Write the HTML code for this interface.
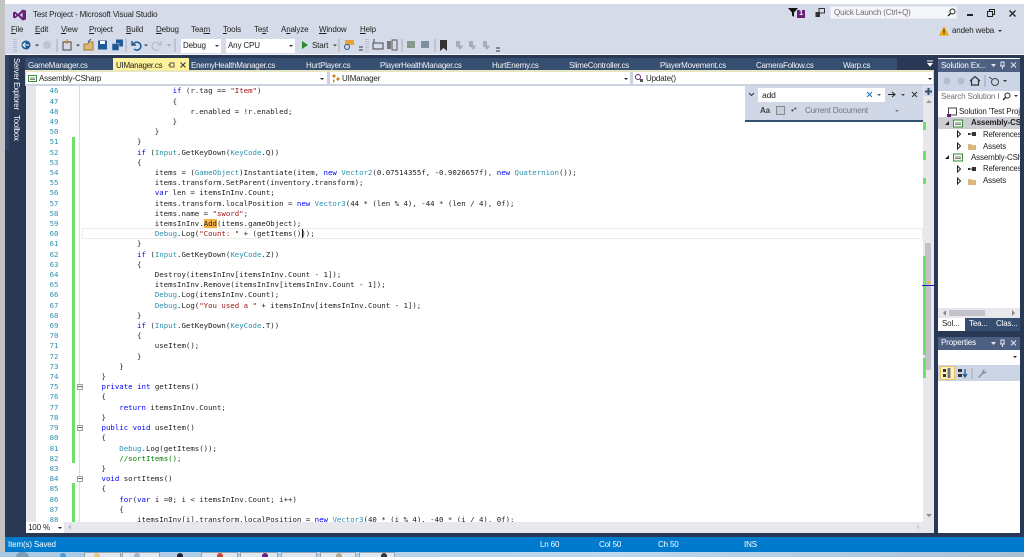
<!DOCTYPE html>
<html><head><meta charset="utf-8"><title>Test Project - Microsoft Visual Studio</title>
<style>
*{box-sizing:border-box}
html,body{margin:0;padding:0;width:1024px;height:557px;overflow:hidden;background:#fff}
body{position:relative;font-family:"Liberation Sans",sans-serif;font-size:8px;letter-spacing:-.15px;color:#1e1e1e}
.a,.t{position:absolute}
.t{white-space:pre;line-height:10px;height:10px}
.c{position:absolute;left:66px;top:86.400px;margin:0;font:7.390px/10.200px "DejaVu Sans Mono",monospace;letter-spacing:0;color:#222;white-space:pre}
.n{position:absolute;left:40px;width:18.500px;top:86.400px;margin:0;font:7.390px/10.200px "DejaVu Sans Mono",monospace;letter-spacing:0;color:#2b91af;text-align:right;white-space:pre}
.k{color:#0000ff}.y{color:#2b91af}.s{color:#a31515}.g{color:#008000}
.hl{background:#f5b34a}
.w{color:#fff}
.tab{color:#f0f3f8;top:61px;letter-spacing:-.25px}
.fold{position:absolute;left:77px;width:6px;height:6px;border:1px solid #a0a0a0;background:#fff}
.fold:after{content:"";position:absolute;left:0;top:1px;width:4px;height:1px;background:#666}
.btn{position:absolute;top:552px;height:5px;background:#dfe8f1;border:1px solid #98a4b0;border-bottom:0}
.dot{position:absolute;top:553px;width:6px;height:4px;border-radius:3px 3px 0 0}
</style></head><body>

<div class="a" style="left:0;top:0;width:5px;height:557px;background:#c3c3c3"></div>
<div class="a" style="left:5px;top:0;width:1019px;height:4px;background:#fff"></div>
<div class="a" style="left:5px;top:4px;width:1019px;height:50px;background:#d6dbe9"></div>
<div class="a" style="left:5px;top:54px;width:1019px;height:1px;background:#f4f6fa"></div>
<div class="a" style="left:5px;top:55px;width:1019px;height:482px;background:#293955"></div>

<svg class="a" style="left:12px;top:9px" width="15" height="12" viewBox="0 0 15 12"><path d="M1 3.500 L3 2.500 L6 5 L10.500 0.500 L14 1.500 V10.500 L10.500 11.500 L6 7 L3 9.500 L1 8.500 Z M3 4.800 V7.200 L4.500 6 Z M10.500 3.600 L7.800 6 L10.500 8.400 Z" fill="#68217a" fill-rule="evenodd"/></svg>
<div class="t" style="left:33px;top:10px">Test Project - Microsoft Visual Studio</div>

<svg class="a" style="left:788px;top:8px" width="10" height="9" viewBox="0 0 10 9"><path d="M0 0H10L6 4.500V9L4 7.500V4.500Z" fill="#111"/></svg>
<div class="a" style="left:797px;top:10px;width:8px;height:8px;background:#68217a;color:#fff;font-size:7px;line-height:8px;text-align:center;font-weight:bold">1</div>
<svg class="a" style="left:815px;top:8px" width="10" height="10" viewBox="0 0 10 10"><rect x="4" y="0.500" width="5.500" height="4.500" fill="none" stroke="#333"/><rect x="0.500" y="4" width="4.500" height="5" fill="#333"/></svg>
<div class="a" style="left:830px;top:6px;width:127px;height:13px;background:#f5f6fa;border:1px solid #e6e9f2"></div>
<div class="t" style="left:834px;top:8px;color:#6d6d6d">Quick Launch (Ctrl+Q)</div>
<svg class="a" style="left:947px;top:8px" width="9" height="9" viewBox="0 0 9 9"><circle cx="5.500" cy="3.500" r="2.500" fill="none" stroke="#222"/><path d="M3.500 5.500L1 8" stroke="#222" stroke-width="1.300"/></svg>
<div class="a" style="left:967px;top:14px;width:6px;height:2px;background:#222"></div>
<svg class="a" style="left:987px;top:9px" width="8" height="8" viewBox="0 0 8 8"><rect x="2.500" y="0.500" width="5" height="5" fill="none" stroke="#222"/><rect x="0.500" y="2.500" width="5" height="5" fill="#d6dbe9" stroke="#222"/></svg>
<svg class="a" style="left:1009px;top:10px" width="7" height="7" viewBox="0 0 7 7"><path d="M0.500 0.500L6.500 6.500M6.500 0.500L0.500 6.500" stroke="#222" stroke-width="1.300"/></svg>
<svg class="a" style="left:939px;top:26px" width="10" height="10" viewBox="0 0 10 10"><path d="M5 0L10 9.500H0Z" fill="#f2a900"/><rect x="4.500" y="3" width="1" height="4" fill="#222"/><rect x="4.500" y="7.600" width="1" height="1" fill="#222"/></svg>
<div class="t" style="left:952px;top:26px">andeh weba</div>
<div class="a" style="left:998px;top:30px;border:2px solid transparent;border-top:2px solid #333"></div>

<div class="t" style="left:11px;top:25px"><u>F</u>ile</div>
<div class="t" style="left:35px;top:25px"><u>E</u>dit</div>
<div class="t" style="left:61px;top:25px"><u>V</u>iew</div>
<div class="t" style="left:89px;top:25px"><u>P</u>roject</div>
<div class="t" style="left:126px;top:25px"><u>B</u>uild</div>
<div class="t" style="left:156px;top:25px"><u>D</u>ebug</div>
<div class="t" style="left:191px;top:25px">Tea<u>m</u></div>
<div class="t" style="left:223px;top:25px"><u>T</u>ools</div>
<div class="t" style="left:254px;top:25px">Te<u>s</u>t</div>
<div class="t" style="left:281px;top:25px">A<u>n</u>alyze</div>
<div class="t" style="left:319px;top:25px"><u>W</u>indow</div>
<div class="t" style="left:360px;top:25px"><u>H</u>elp</div>

<svg class="a" style="left:12px;top:38px" width="520" height="15" viewBox="0 0 520 15">
<path d="M2 1v13M4 1v13" stroke="#a0a6b5" stroke-dasharray="1 1"/>
<circle cx="14" cy="7" r="4.500" fill="#1e5a96"/><path d="M17 7H11M13.500 4.500L11 7L13.500 9.500" stroke="#fff" fill="none"/>
<path d="M23 6.500h4l-2 2z" fill="#444"/>
<circle cx="35" cy="7" r="4" fill="#c0c4cc"/>
<path d="M45 1v13" stroke="#aab"/>
<rect x="51" y="4" width="8" height="8" fill="none" stroke="#444"/><path d="M55 1v5M52.500 3.500h5" stroke="#c27d1a"/>
<path d="M64 6.500h4l-2 2z" fill="#444"/>
<path d="M72 6h4l1-2h4v8H72z" fill="#dcb67a" stroke="#a07a30"/><path d="M76 4l3-3" stroke="#1e5a96"/>
<rect x="86" y="2.500" width="9" height="9" fill="#1e5a96"/><rect x="88" y="3" width="5" height="3" fill="#fff"/>
<rect x="104" y="1.500" width="7" height="7" fill="#1e5a96"/><rect x="100" y="5.500" width="7" height="7" fill="#1e5a96" stroke="#d6dbe9" stroke-width=".5"/>
<path d="M114 1v13" stroke="#aab"/>
<path d="M120 3v4h4M121 7a4 4 0 1 1 1 4" fill="none" stroke="#1e5a96" stroke-width="1.500"/>
<path d="M132 6.500h4l-2 2z" fill="#444"/>
<path d="M149 3v4h-4M148 7a4 4 0 1 0-1 4" fill="none" stroke="#b8bcc6" stroke-width="1.300"/>
<path d="M155 6.500h4l-2 2z" fill="#999"/>
<path d="M163 1v13" stroke="#aab"/>
<path d="M290 3v8l6-4z" fill="#2c8a2c"/>
<path d="M321 6.500h4l-2 2z" fill="#444"/>
<path d="M327 1v13" stroke="#aab"/>
<rect x="333" y="2" width="9" height="5" fill="#e8a33a"/><circle cx="335" cy="9" r="2.500" fill="none" stroke="#1e5a96"/>
<path d="M347 9h4M347 12h4" stroke="#333"/>
<path d="M354 1v13M356 1v13" stroke="#a0a6b5" stroke-dasharray="1 1"/>
<rect x="361" y="5" width="10" height="6" fill="none" stroke="#444"/><path d="M362 1v4" stroke="#1e5a96"/>
<rect x="375" y="3" width="4" height="8" fill="#777"/><rect x="380" y="2" width="5" height="10" fill="none" stroke="#555"/>
<path d="M390 1v13" stroke="#aab"/>
<rect x="395" y="3" width="8" height="7" fill="#8a9a8a"/><rect x="409" y="3" width="8" height="7" fill="#7f8ea0"/>
<path d="M423 1v13" stroke="#aab"/>
<path d="M428 2h7v11l-3.500-3-3.500 3z" fill="#333"/>
<path d="M444 3h4v4l3 1-3 4-2-3h-2z" fill="#a8adb8"/><path d="M457 3h4v4l3 1-3 4-2-3h-2z" fill="#a8adb8"/><path d="M471 3h4v4l3 1-3 4-2-3h-2z" fill="#a8adb8"/>
<path d="M484 10h4M484 13h4" stroke="#333"/>
</svg>
<div class="a" style="left:181px;top:39px;width:40px;height:14px;background:#fff"></div>
<div class="t" style="left:183px;top:41px">Debug</div>
<div class="a" style="left:215px;top:45px;border:2px solid transparent;border-top:2px solid #333"></div>
<div class="a" style="left:226px;top:39px;width:69px;height:14px;background:#fff"></div>
<div class="t" style="left:228px;top:41px">Any CPU</div>
<div class="a" style="left:289px;top:45px;border:2px solid transparent;border-top:2px solid #333"></div>
<div class="t" style="left:312px;top:41px">Start</div>

<svg class="a" style="left:5px;top:55px" width="20" height="100" viewBox="0 0 20 100"><rect x="0" y="0" width="4" height="95" fill="#364e6f" opacity=".6"/></svg>
<div class="t w" style="left:10px;top:58px;font-size:7.800px;transform-origin:0 0;transform:translate(11px,0) rotate(90deg)">Server Explorer</div>
<div class="t w" style="left:10px;top:115px;font-size:7.800px;transform-origin:0 0;transform:translate(11px,0) rotate(90deg)">Toolbox</div>

<div class="a" style="left:25px;top:58px;width:872px;height:12px;background:#364e6f"></div>
<div class="a" style="left:113px;top:58px;width:76px;height:12px;background:#fff29d"></div>
<div class="a" style="left:25px;top:70px;width:909px;height:2px;background:#e8e6c0"></div>
<div class="t tab" style="left:28px">GameManager.cs</div>
<div class="t tab" style="left:116px;color:#222">UIManager.cs</div>
<svg class="a" style="left:168px;top:62px" width="7" height="6" viewBox="0 0 7 6"><path d="M0 3h2M2 1v4h4V1z" stroke="#555" fill="none"/></svg>
<svg class="a" style="left:180px;top:62px" width="6" height="6" viewBox="0 0 6 6"><path d="M0.500 0.500L5.500 5.500M5.500 0.500L0.500 5.500" stroke="#333"/></svg>
<div class="t tab" style="left:191px">EnemyHealthManager.cs</div>
<div class="t tab" style="left:306px">HurtPlayer.cs</div>
<div class="t tab" style="left:380px">PlayerHealthManager.cs</div>
<div class="t tab" style="left:492px">HurtEnemy.cs</div>
<div class="t tab" style="left:569px">SlimeController.cs</div>
<div class="t tab" style="left:660px">PlayerMovement.cs</div>
<div class="t tab" style="left:756px">CameraFollow.cs</div>
<div class="t tab" style="left:843px">Warp.cs</div>
<svg class="a" style="left:927px;top:60px" width="6" height="7" viewBox="0 0 6 7"><path d="M0 1h6M1 3.500h4l-2 2.500z" stroke="#fff" fill="#fff"/></svg>

<div class="a" style="left:25px;top:72px;width:909px;height:14px;background:#ccd2df"></div>
<div class="a" style="left:26px;top:72px;width:301px;height:12px;background:#fff"></div>
<div class="a" style="left:330px;top:72px;width:300px;height:12px;background:#fff"></div>
<div class="a" style="left:633px;top:72px;width:300px;height:12px;background:#fff"></div>
<svg class="a" style="left:28px;top:74px" width="9" height="9" viewBox="0 0 9 9"><rect x=".5" y="1.500" width="8" height="6" fill="#fff" stroke="#3a8a3a"/><path d="M2 4h5M2 5.500h5" stroke="#555" stroke-width=".7"/></svg>
<div class="t" style="left:39px;top:74px">Assembly-CSharp</div>
<svg class="a" style="left:331px;top:74px" width="10" height="9" viewBox="0 0 10 9"><path d="M3 0l2 2-2 2-2-2zM7 3l2 2-2 2-2-2zM2 5l2 2-2 2z" fill="#c9812a"/></svg>
<div class="t" style="left:342px;top:74px">UIManager</div>
<svg class="a" style="left:635px;top:74px" width="8" height="9" viewBox="0 0 8 9"><circle cx="3" cy="3" r="2.500" fill="none" stroke="#68217a"/><rect x="5" y="5" width="3" height="3" fill="#555"/></svg>
<div class="t" style="left:646px;top:74px">Update()</div>
<div class="a" style="left:320px;top:78px;border:2px solid transparent;border-top:2px solid #222"></div>
<div class="a" style="left:624px;top:78px;border:2px solid transparent;border-top:2px solid #222"></div>
<div class="a" style="left:928px;top:78px;border:2px solid transparent;border-top:2px solid #222"></div>

<div class="a" style="left:26px;top:86px;width:898px;height:436px;background:#fff;overflow:hidden">
<div class="a" style="left:0;top:0;width:10px;height:436px;background:#e6e7e8"></div>
<div class="a" style="left:46px;top:51px;width:3px;height:326px;background:#6ee06a"></div>
<div class="a" style="left:46px;top:397px;width:3px;height:39px;background:#6ee06a"></div>
<div class="a" style="left:53px;top:0;width:1px;height:436px;background:#dcdcdc"></div>
<div class="a" style="left:56px;top:142px;width:841px;height:11px;border:1px solid #ececec"></div>
</div>
<div class="fold" style="top:384px"></div>
<div class="fold" style="top:425px"></div>
<div class="fold" style="top:476px"></div>

<div class="a" style="left:0;top:86px;width:924px;height:436px;overflow:hidden"><div class="a" style="left:0;top:-86px;width:924px;height:522px">
<pre class="n">46
47
48
49
50
51
52
53
54
55
56
57
58
59
60
61
62
63
64
65
66
67
68
69
70
71
72
73
74
75
76
77
78
79
80
81
82
83
84
85
86
87
88</pre>
<pre class="c">                        <span class="k">if</span> (r.tag == <span class="s">"Item"</span>)
                        {
                            r.enabled = !r.enabled;
                        }
                    }
                }
                <span class="k">if</span> (<span class="y">Input</span>.GetKeyDown(<span class="y">KeyCode</span>.Q))
                {
                    items = (<span class="y">GameObject</span>)Instantiate(item, <span class="k">new</span> <span class="y">Vector2</span>(0.07514355f, -0.9026657f), <span class="k">new</span> <span class="y">Quaternion</span>());
                    items.transform.SetParent(inventory.transform);
                    <span class="k">var</span> len = itemsInInv.Count;
                    items.transform.localPosition = <span class="k">new</span> <span class="y">Vector3</span>(44 * (len % 4), -44 * (len / 4), 0f);
                    items.name = <span class="s">"sword"</span>;
                    itemsInInv.<span class="hl">Add</span>(items.gameObject);
                    <span class="y">Debug</span>.Log(<span class="s">"Count: "</span> + (getItems()));
                }
                <span class="k">if</span> (<span class="y">Input</span>.GetKeyDown(<span class="y">KeyCode</span>.Z))
                {
                    Destroy(itemsInInv[itemsInInv.Count - 1]);
                    itemsInInv.Remove(itemsInInv[itemsInInv.Count - 1]);
                    <span class="y">Debug</span>.Log(itemsInInv.Count);
                    <span class="y">Debug</span>.Log(<span class="s">"You used a "</span> + itemsInInv[itemsInInv.Count - 1]);
                }
                <span class="k">if</span> (<span class="y">Input</span>.GetKeyDown(<span class="y">KeyCode</span>.T))
                {
                    useItem();
                }
            }
        }
        <span class="k">private</span> <span class="k">int</span> getItems()
        {
            <span class="k">return</span> itemsInInv.Count;
        }
        <span class="k">public</span> <span class="k">void</span> useItem()
        {
            <span class="y">Debug</span>.Log(getItems());
            <span class="g">//sortItems();</span>
        }
        <span class="k">void</span> sortItems()
        {
            <span class="k">for</span>(<span class="k">var</span> i =0; i &lt; itemsInInv.Count; i++)
            {
                itemsInInv[i].transform.localPosition = <span class="k">new</span> <span class="y">Vector3</span>(40 * (i % 4), -40 * (i / 4), 0f);</pre>
</div></div>
<div class="a" style="left:302px;top:229px;width:1px;height:9px;background:#111"></div>

<div class="a" style="left:745px;top:86px;width:179px;height:35px;background:#d0d7e6"></div>
<div class="a" style="left:745px;top:120px;width:179px;height:2px;background:#34506f"></div>
<div class="a" style="left:758px;top:88px;width:127px;height:14px;background:#fff"></div>
<div class="t" style="left:762px;top:90px;color:#222;font-size:8.500px">add</div>
<svg class="a" style="left:749px;top:91px" width="175" height="28" viewBox="0 0 175 28"><path d="M0 2l2.500 2.500L5 2" stroke="#333" fill="none"/><path d="M118 1l5 5M123 1l-5 5" stroke="#1e74c0"/><path d="M128 3h4l-2 2z" fill="#555"/><path d="M139 3.500h7M143 1l3 2.500-3 2.500" stroke="#222" fill="none"/><path d="M152 3h4l-2 2z" fill="#444"/><path d="M163 1l5 5M168 1l-5 5" stroke="#333"/><path d="M146 19h4l-2 2z" fill="#777"/></svg>
<div class="t" style="left:760px;top:106px;font-weight:bold;color:#444">Aa</div>
<div class="a" style="left:776px;top:106px;width:9px;height:9px;border:1px solid #888;background:#c8cdd8"></div>
<div class="t" style="left:791px;top:106px;color:#444">•*</div>
<div class="t" style="left:805px;top:106px;color:#6f7480">Current Document</div>

<div class="a" style="left:923px;top:86px;width:11px;height:447px;background:#e8e8ec"></div>
<div class="a" style="left:924px;top:87px;width:9px;height:9px;background:#d2d9e8"></div>
<svg class="a" style="left:924px;top:87px" width="9" height="9" viewBox="0 0 9 9"><path d="M4.500 1v7M1 4.500h7" stroke="#34506f" stroke-width="2"/></svg>
<div class="a" style="left:926px;top:100px;border:3px solid transparent;border-bottom:3px solid #9a9aa2;border-top:0"></div>
<div class="a" style="left:926px;top:514px;border:3px solid transparent;border-top:3px solid #8a8a92;border-bottom:0"></div>
<div class="a" style="left:925px;top:243px;width:6px;height:127px;background:#c2c3c9"></div>
<div class="a" style="left:923px;top:122px;width:3px;height:8px;background:#6ee06a"></div>
<div class="a" style="left:923px;top:151px;width:3px;height:9px;background:#6ee06a"></div>
<div class="a" style="left:923px;top:178px;width:3px;height:6px;background:#6ee06a"></div>
<div class="a" style="left:923px;top:256px;width:3px;height:99px;background:#6ee06a"></div>
<div class="a" style="left:923px;top:358px;width:3px;height:20px;background:#6ee06a"></div>
<div class="a" style="left:927px;top:281px;width:3px;height:3px;background:#f5b12e;border-radius:50%"></div>
<div class="a" style="left:922px;top:285px;width:12px;height:1px;background:#1a1ac0"></div>

<div class="a" style="left:26px;top:522px;width:897px;height:11px;background:#e8e8ec"></div>
<div class="a" style="left:26px;top:522px;width:38px;height:11px;background:#fff"></div>
<div class="t" style="left:28px;top:523px">100 %</div>
<div class="a" style="left:58px;top:527px;border:2px solid transparent;border-top:2px solid #222"></div>
<div class="a" style="left:68px;top:524px;border:3px solid transparent;border-right:3px solid #c2c3c9;border-left:0"></div>
<div class="a" style="left:917px;top:524px;border:3px solid transparent;border-left:3px solid #d0d0d6;border-right:0"></div>

<div class="a" style="left:938px;top:58px;width:82px;height:251px;background:#fff"></div>
<div class="a" style="left:938px;top:59px;width:82px;height:13px;background:#4d6082"></div>
<div class="t w" style="left:941px;top:61px">Solution Ex...</div>
<svg class="a" style="left:990px;top:61px" width="28" height="9" viewBox="0 0 28 9"><path d="M1 3h5L3.500 6z" fill="#e6e9f0"/><path d="M11 1h3v4h-3zM10 5h5M12.500 5v3" stroke="#e6e9f0" fill="none"/><path d="M21 1.500l5 5M26 1.500l-5 5" stroke="#e6e9f0"/></svg>
<div class="a" style="left:938px;top:72px;width:82px;height:19px;background:#ccd5e6"></div>
<svg class="a" style="left:942px;top:74px" width="76" height="15" viewBox="0 0 76 15"><circle cx="5" cy="7" r="3.500" fill="#b6bcc9"/><circle cx="19" cy="7" r="3.500" fill="#b6bcc9"/><path d="M28 7l5-4.500L38 7M29.500 6v5h7V6" fill="none" stroke="#333" stroke-width="1.200"/><path d="M43 1v12" stroke="#9aa3b5"/><circle cx="53" cy="8" r="3.500" fill="none" stroke="#444"/><path d="M47 3l3 2" stroke="#444"/><path d="M61 6h4l-2 2z" fill="#333"/></svg>
<div class="a" style="left:938px;top:91px;width:82px;height:13px;background:#fff"></div>
<div class="t" style="left:941px;top:92px;color:#707070">Search Solution I</div>
<svg class="a" style="left:1002px;top:92px" width="17" height="9" viewBox="0 0 17 9"><circle cx="5.500" cy="3.500" r="2.500" fill="none" stroke="#222"/><path d="M3.500 5.500L1 8" stroke="#222" stroke-width="1.300"/><path d="M12 3h4l-2 2z" fill="#333"/></svg>
<div class="a" style="left:938px;top:117px;width:82px;height:12px;background:#ccced4"></div>
<svg class="a" style="left:947px;top:107px" width="10" height="10" viewBox="0 0 10 10"><rect x="1.500" y="1" width="8" height="7" fill="#fff" stroke="#444"/><path d="M0 7h4v3H0z" fill="#68217a"/></svg>
<div class="t" style="left:959px;top:107px;width:61px;overflow:hidden">Solution 'Test Proj</div>
<svg class="a" style="left:945px;top:119px" width="18" height="9" viewBox="0 0 18 9"><path d="M0 6l4-4v4z" fill="#222"/><rect x="8.500" y="1" width="9" height="7" fill="#f4fff0" stroke="#3a8a3a"/><path d="M10 4h6M10 5.500h6" stroke="#555" stroke-width=".7"/></svg>
<div class="t" style="left:971px;top:118px;font-weight:bold;width:49px;overflow:hidden">Assembly-CSh</div>
<svg class="a" style="left:957px;top:130px" width="20" height="9" viewBox="0 0 20 9"><path d="M.5 1l3 3-3 3z" fill="none" stroke="#222"/><rect x="11" y="3" width="2" height="2" fill="#333"/><rect x="15" y="2" width="4" height="4" fill="#333"/><path d="M13 4h2" stroke="#333"/></svg>
<div class="t" style="left:983px;top:130px;width:37px;overflow:hidden;font-size:7.800px">References</div>
<svg class="a" style="left:957px;top:142px" width="20" height="9" viewBox="0 0 20 9"><path d="M.5 1l3 3-3 3z" fill="none" stroke="#222"/><path d="M11 2h3l1 1h4v5h-8z" fill="#dcb67a"/></svg>
<div class="t" style="left:983px;top:142px">Assets</div>
<svg class="a" style="left:945px;top:153px" width="18" height="9" viewBox="0 0 18 9"><path d="M0 6l4-4v4z" fill="#222"/><rect x="8.500" y="1" width="9" height="7" fill="#f4fff0" stroke="#3a8a3a"/><path d="M10 4h6M10 5.500h6" stroke="#555" stroke-width=".7"/></svg>
<div class="t" style="left:971px;top:153px;width:49px;overflow:hidden">Assembly-CSh</div>
<svg class="a" style="left:957px;top:165px" width="20" height="9" viewBox="0 0 20 9"><path d="M.5 1l3 3-3 3z" fill="none" stroke="#222"/><rect x="11" y="3" width="2" height="2" fill="#333"/><rect x="15" y="2" width="4" height="4" fill="#333"/><path d="M13 4h2" stroke="#333"/></svg>
<div class="t" style="left:983px;top:164px;width:37px;overflow:hidden;font-size:7.800px">References</div>
<svg class="a" style="left:957px;top:177px" width="20" height="9" viewBox="0 0 20 9"><path d="M.5 1l3 3-3 3z" fill="none" stroke="#222"/><path d="M11 2h3l1 1h4v5h-8z" fill="#dcb67a"/></svg>
<div class="t" style="left:983px;top:176px">Assets</div>

<div class="a" style="left:938px;top:308px;width:82px;height:10px;background:#e8e8ec"></div>
<div class="a" style="left:949px;top:310px;width:36px;height:6px;background:#c2c3c9"></div>
<div class="a" style="left:943px;top:310px;border:3px solid transparent;border-right:3px solid #888;border-left:0"></div>
<div class="a" style="left:1012px;top:310px;border:3px solid transparent;border-left:3px solid #888;border-right:0"></div>
<div class="a" style="left:938px;top:318px;width:82px;height:13px;background:#364e6f"></div>
<div class="a" style="left:938px;top:318px;width:27px;height:13px;background:#fff"></div>
<div class="t" style="left:942px;top:319px">Sol...</div>
<div class="t w" style="left:969px;top:319px">Tea...</div>
<div class="t w" style="left:996px;top:319px">Clas...</div>

<div class="a" style="left:938px;top:337px;width:82px;height:196px;background:#fff"></div>
<div class="a" style="left:938px;top:337px;width:82px;height:13px;background:#4d6082"></div>
<div class="t w" style="left:941px;top:338px">Properties</div>
<svg class="a" style="left:990px;top:339px" width="28" height="9" viewBox="0 0 28 9"><path d="M1 3h5L3.500 6z" fill="#e6e9f0"/><path d="M11 1h3v4h-3zM10 5h5M12.500 5v3" stroke="#e6e9f0" fill="none"/><path d="M21 1.500l5 5M26 1.500l-5 5" stroke="#e6e9f0"/></svg>
<div class="a" style="left:1013px;top:356px;border:2px solid transparent;border-top:2px solid #222"></div>
<div class="a" style="left:938px;top:365px;width:82px;height:16px;background:#ccd5e6"></div>
<div class="a" style="left:940px;top:366px;width:15px;height:14px;background:#fff0c4;border:1px solid #e5c365"></div>
<svg class="a" style="left:943px;top:368px" width="50" height="11" viewBox="0 0 50 11"><path d="M0 1h3v3H0zM0 6h3v3H0z" fill="#333"/><path d="M4.500 0h3v10h-3z" fill="#777"/><path d="M15 1h4v3h-4zM15 6h4v3h-4z" fill="#333"/><path d="M22 1v7M20 6l2 3 2-3" stroke="#1e5a96" fill="none" stroke-width="1.300"/><path d="M29-2v13" stroke="#a0a8ba"/><path d="M35 9l4-4 1-3 2-1-1 2 1 1 2-1-1 2-3 1-4 4z" fill="#8a8f9a"/></svg>

<div class="a" style="left:5px;top:537px;width:1019px;height:15px;background:#007acc"></div>
<div class="t w" style="left:8px;top:540px">Item(s) Saved</div>
<div class="t w" style="left:540px;top:540px">Ln 60</div>
<div class="t w" style="left:599px;top:540px">Col 50</div>
<div class="t w" style="left:658px;top:540px">Ch 50</div>
<div class="t w" style="left:744px;top:540px">INS</div>

<div class="a" style="left:0;top:552px;width:1024px;height:5px;background:linear-gradient(90deg,#a8c8e4,#bcd8ee 60%,#a8c0d4)"></div>
<div class="a" style="left:16px;top:552px;width:13px;height:5px;background:#7d9cb8;border-radius:7px 7px 0 0"></div>
<div class="btn" style="left:84px;width:37px"></div>
<div class="btn" style="left:122px;width:38px"></div>
<div class="btn" style="left:201px;width:37px"></div>
<div class="btn" style="left:240px;width:38px"></div>
<div class="btn" style="left:281px;width:36px"></div>
<div class="btn" style="left:320px;width:36px"></div>
<div class="btn" style="left:359px;width:36px"></div>
<div class="dot" style="left:60px;background:#3f9fdf"></div>
<div class="dot" style="left:94px;background:#e6c47a"></div>
<div class="dot" style="left:134px;background:#9fb4c8"></div>
<div class="dot" style="left:177px;background:#223"></div>
<div class="dot" style="left:217px;background:#c8443a"></div>
<div class="dot" style="left:262px;background:#68217a"></div>
<div class="dot" style="left:336px;background:#b0a890"></div>
<div class="dot" style="left:381px;background:#333"></div>
</body></html>
